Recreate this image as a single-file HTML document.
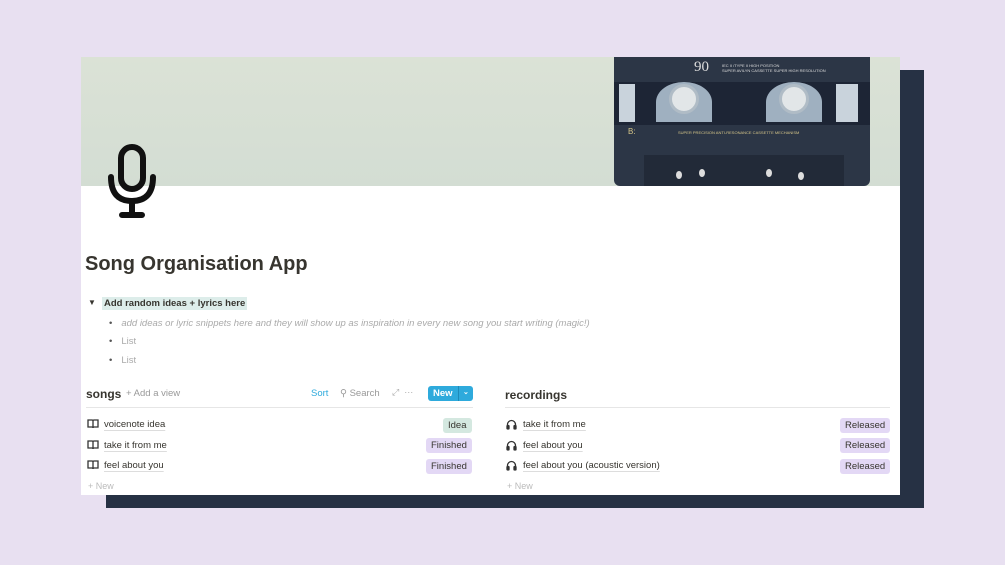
<!DOCTYPE html>
<html><head><meta charset="utf-8"><style>
*{box-sizing:border-box;margin:0;padding:0}
body{width:1005px;height:565px;background:#e8e0f1;position:relative;overflow:hidden;font-family:"Liberation Sans",sans-serif;color:#37352f}
.sh{position:absolute;left:106px;top:70px;width:818px;height:438px;background:#263144}
.card{position:absolute;left:81px;top:57px;width:819px;height:438px;background:#fff;overflow:hidden}
.ban{position:absolute;left:0;top:0;width:819px;height:129px;background:linear-gradient(180deg,#dbe2d6,#d3ddd3)}
.cas{position:absolute;left:533px;top:0;width:256px;height:129px;background:#2c3646;border-radius:0 0 6px 6px}
.abs{position:absolute}
.t{font-size:10px;white-space:nowrap}
.r{font-size:9.5px;color:#37352f;text-decoration:underline;text-decoration-color:#ddd;text-underline-offset:3px}
.tag{position:absolute;font-size:9.5px;padding:2px 5px;border-radius:3px}
</style></head><body>
<div class="sh"></div>
<div class="card">
 <div class="ban"></div>
 <div class="cas">
  <div class="abs" style="left:0;top:25px;width:256px;height:43px;background:#1d2535"></div>
  <div class="abs" style="left:5px;top:27px;width:16px;height:38px;background:#c9d3dc"></div>
  <div class="abs" style="left:222px;top:27px;width:22px;height:38px;background:#c9d3dc"></div>
  <div class="abs" style="left:42px;top:25px;width:56px;height:40px;border-radius:50% 50% 0 0;background:#9fb0c0"></div>
  <div class="abs" style="left:152px;top:25px;width:56px;height:40px;border-radius:50% 50% 0 0;background:#9fb0c0"></div>
  <div class="abs" style="left:55px;top:27px;width:30px;height:30px;border-radius:50%;background:#e2e6e8;border:3px solid #b0bcc6"></div>
  <div class="abs" style="left:165px;top:27px;width:30px;height:30px;border-radius:50%;background:#e2e6e8;border:3px solid #b0bcc6"></div>
  <div class="abs" style="left:80px;top:2px;color:#ddd;font-family:'Liberation Serif',serif;font-size:15px">90</div>
  <div class="abs" style="left:108px;top:6px;color:#ddd;font-size:4px">IEC II /TYPE II HIGH POSITION<br>SUPER AVILYN CASSETTE SUPER HIGH RESOLUTION</div>
  <div class="abs" style="left:14px;top:70px;color:#d6c68a;font-size:8px">B:</div>
  <div class="abs" style="left:64px;top:73px;color:#d6c68a;font-size:4px">SUPER PRECISION ANTI-RESONANCE CASSETTE MECHANISM</div>
  <div class="abs" style="left:30px;top:98px;width:200px;height:31px;background:#222a38"></div>
  <div class="abs" style="left:62px;top:114px;width:6px;height:8px;border-radius:50%;background:#ddd"></div>
  <div class="abs" style="left:85px;top:112px;width:6px;height:8px;border-radius:50%;background:#ddd"></div>
  <div class="abs" style="left:152px;top:112px;width:6px;height:8px;border-radius:50%;background:#ddd"></div>
  <div class="abs" style="left:184px;top:115px;width:6px;height:8px;border-radius:50%;background:#ddd"></div>
 </div>
 <svg class="abs" style="left:25px;top:86px" width="52" height="76" viewBox="0 0 52 76" fill="none" stroke="#111" stroke-width="6" stroke-linecap="round">
  <rect x="15" y="4" width="22" height="42" rx="11"/>
  <path d="M5 34 Q5 58 26 58 Q47 58 47 34"/>
  <path d="M26 58 V72 M16 72 H36"/>
 </svg>
 <div class="abs" style="left:4px;top:196px;font-size:20px;font-weight:bold;color:#37352f">Song Organisation App</div>
 <div class="abs t" style="left:7px;top:241px;font-size:8px">▼</div>
 <div class="abs t" style="left:21px;top:240px;background:#ddedea;padding:1px 2px;font-weight:bold;font-size:9.5px;color:#37352f">Add random ideas + lyrics here</div>
 <div class="abs t" style="left:28px;top:261px;color:#aaa;font-style:italic;font-size:9.5px"><span style="font-style:normal;color:#555;margin-right:9px">•</span>add ideas or lyric snippets here and they will show up as inspiration in every new song you start writing (magic!)</div>
 <div class="abs t" style="left:28px;top:279px;color:#aaa;font-size:9.5px"><span style="color:#555;margin-right:9px">•</span>List</div>
 <div class="abs t" style="left:28px;top:298px;color:#aaa;font-size:9.5px"><span style="color:#555;margin-right:9px">•</span>List</div>

 <div class="abs" style="left:5px;top:330px;font-size:12px;font-weight:bold">songs</div>
 <div class="abs t" style="left:45px;top:331px;color:#999;font-size:9.5px">+ Add a view</div>
 <div class="abs t" style="left:230px;top:331px;color:#2eaadc;font-size:9.5px">Sort</div>
 <div class="abs t" style="left:259px;top:331px;color:#999;font-size:9.5px">⚲ Search</div>
 <div class="abs t" style="left:311px;top:330px;color:#aaa;font-size:9px">⤢ &nbsp;···</div>
 <div class="abs" style="left:347px;top:329px;width:45px;height:15px;background:#2eaadc;border-radius:3px;color:#fff;font-size:9.5px;font-weight:bold;padding:2px 0 0 5px">New<span style="position:absolute;left:30px;top:0;height:15px;border-left:1px solid #1e8ab8;padding:2px 0 0 4px;font-size:7px">⌄</span></div>
 <div class="abs" style="left:5px;top:350px;width:387px;height:1px;background:#e6e6e6"></div>
 <svg class="abs" style="left:6px;top:362px" width="12" height="10" viewBox="0 0 12 10" fill="none" stroke="#333" stroke-width="1.3"><path d="M1 1H5Q6 1 6 2V9Q6 8 5 8H1Z M11 1H7Q6 1 6 2V9Q6 8 7 8H11Z"/></svg>
 <div class="abs t r" style="left:23px;top:362px">voicenote idea</div>
 <svg class="abs" style="left:6px;top:383px" width="12" height="10" viewBox="0 0 12 10" fill="none" stroke="#333" stroke-width="1.3"><path d="M1 1H5Q6 1 6 2V9Q6 8 5 8H1Z M11 1H7Q6 1 6 2V9Q6 8 7 8H11Z"/></svg>
 <div class="abs t r" style="left:23px;top:383px">take it from me</div>
 <svg class="abs" style="left:6px;top:403px" width="12" height="10" viewBox="0 0 12 10" fill="none" stroke="#333" stroke-width="1.3"><path d="M1 1H5Q6 1 6 2V9Q6 8 5 8H1Z M11 1H7Q6 1 6 2V9Q6 8 7 8H11Z"/></svg>
 <div class="abs t r" style="left:23px;top:403px">feel about you</div>
 <div class="tag" style="left:362px;top:361px;background:#d4e8e0">Idea</div>
 <div class="tag" style="left:345px;top:381px;background:#e3d8f5">Finished</div>
 <div class="tag" style="left:345px;top:402px;background:#e3d8f5">Finished</div>
 <div class="abs t" style="left:7px;top:424px;color:#bbb;font-size:9px">+ New</div>

 <div class="abs" style="left:424px;top:331px;font-size:12px;font-weight:bold">recordings</div>
 <div class="abs" style="left:424px;top:350px;width:385px;height:1px;background:#e6e6e6"></div>
 <svg class="abs" style="left:425px;top:362px" width="11" height="11" viewBox="0 0 11 11" fill="none" stroke="#333" stroke-width="1.3"><path d="M1.5 8V5.5A4 4 0 0 1 9.5 5.5V8"/><rect x="1" y="6.5" width="2" height="3.5" rx=".6" fill="#333"/><rect x="8" y="6.5" width="2" height="3.5" rx=".6" fill="#333"/></svg>
 <div class="abs t r" style="left:442px;top:362px">take it from me</div>
 <svg class="abs" style="left:425px;top:383px" width="11" height="11" viewBox="0 0 11 11" fill="none" stroke="#333" stroke-width="1.3"><path d="M1.5 8V5.5A4 4 0 0 1 9.5 5.5V8"/><rect x="1" y="6.5" width="2" height="3.5" rx=".6" fill="#333"/><rect x="8" y="6.5" width="2" height="3.5" rx=".6" fill="#333"/></svg>
 <div class="abs t r" style="left:442px;top:383px">feel about you</div>
 <svg class="abs" style="left:425px;top:403px" width="11" height="11" viewBox="0 0 11 11" fill="none" stroke="#333" stroke-width="1.3"><path d="M1.5 8V5.5A4 4 0 0 1 9.5 5.5V8"/><rect x="1" y="6.5" width="2" height="3.5" rx=".6" fill="#333"/><rect x="8" y="6.5" width="2" height="3.5" rx=".6" fill="#333"/></svg>
 <div class="abs t r" style="left:442px;top:403px">feel about you (acoustic version)</div>
 <div class="tag" style="left:759px;top:361px;background:#e3d8f5">Released</div>
 <div class="tag" style="left:759px;top:381px;background:#e3d8f5">Released</div>
 <div class="tag" style="left:759px;top:402px;background:#e3d8f5">Released</div>
 <div class="abs t" style="left:426px;top:424px;color:#bbb;font-size:9px">+ New</div>
</div>
</body></html>
